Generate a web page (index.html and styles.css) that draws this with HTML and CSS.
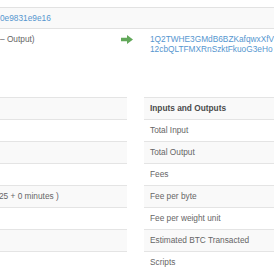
FILE: index.html
```html
<!DOCTYPE html>
<html>
<head>
<meta charset="utf-8">
<link rel="stylesheet" href="styles.css">
</head>
<body>
<div class="page">
  <div class="top-gap"></div>
  <div class="hash-row"><a class="link hash" href="#">0e9831e9e16</a></div>
  <div class="io">
    <div class="io-left">– Output)</div>
    <div class="io-arrow">
      <svg width="12" height="9" viewBox="0 0 12 9"><path d="M0 2.8 H6 V0 L12 4.5 L6 9 V6.2 H0 Z" fill="#62a85a"/></svg>
    </div>
    <div class="io-right">
      <a class="link addr" href="#">1Q2TWHE3GMdB6BZKafqwxXfV</a>
      <a class="link addr" href="#">12cbQLTFMXRnSzktFkuoG3eHo</a>
    </div>
  </div>
  <div class="tables">
    <div class="table left">
      <div class="row odd"></div>
      <div class="row"></div>
      <div class="row odd"></div>
      <div class="row"></div>
      <div class="row odd"><span class="clip">25 + 0 minutes )</span></div>
      <div class="row"></div>
      <div class="row odd"></div>
      <div class="row"></div>
    </div>
    <div class="table right">
      <div class="row odd head">Inputs and Outputs</div>
      <div class="row">Total Input</div>
      <div class="row odd">Total Output</div>
      <div class="row">Fees</div>
      <div class="row odd">Fee per byte</div>
      <div class="row">Fee per weight unit</div>
      <div class="row odd">Estimated BTC Transacted</div>
      <div class="row">Scripts</div>
    </div>
  </div>
</div>
</body>
</html>
```
FILE: styles.css
```css
html, body {
  margin: 0;
  padding: 0;
  background: #fff;
}
body {
  font-family: "Liberation Sans", Arial, sans-serif;
  font-size: 8.3px;
  color: #666;
  overflow: hidden;
  width: 274px;
  height: 274px;
}
.page {
  width: 274px;
}
.top-gap {
  height: 7px;
}
.hash-row {
  border-top: 1px solid #e2e2e2;
  border-bottom: 1px solid #e2e2e2;
  background: #f9f9f9;
  height: 20px;
  line-height: 20px;
}
.link {
  color: #5596cf;
  text-decoration: none;
}
.io {
  display: flex;
  align-items: flex-start;
  padding-top: 5px;
  height: 63px;
}
.io-left {
  width: 121px;
  line-height: 11px;
}
.io-arrow {
  width: 29px;
  padding-top: 1px;
  line-height: 0;
}
.io-right {
  display: flex;
  flex-direction: column;
  line-height: 10.3px;
  white-space: nowrap;
  flex: 1;
  min-width: 0;
}
.tables {
  display: flex;
  gap: 17px;
}
.table.left {
  width: 127px;
}
.table.right {
  flex: 1;
}
.row {
  border-top: 1px solid #e4e4e4;
  height: 21px;
  line-height: 21px;
  white-space: nowrap;
  overflow: hidden;
}
.table.right .row {
  padding-left: 6px;
}
.row.odd {
  background: #f9f9f9;
}
.row.head {
  font-weight: bold;
  color: #4a4a4a;
}
.clip {
  display: inline-block;
  margin-left: -1px;
}
```
